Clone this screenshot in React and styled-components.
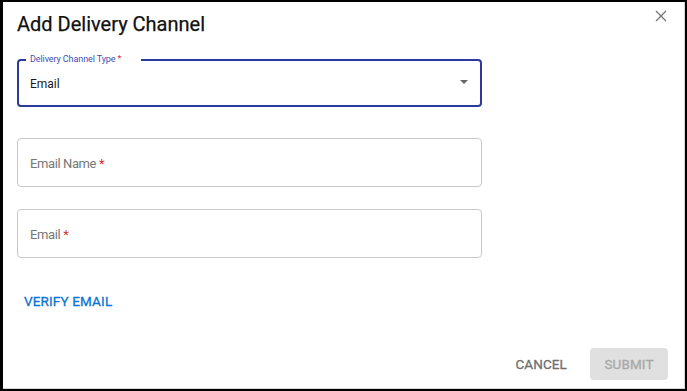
import React from "react";
import styled, { createGlobalStyle } from "styled-components";

const GlobalStyle = createGlobalStyle`
  html, body {
    margin: 0;
    padding: 0;
    background: #000;
  }
  body {
    font-family: Roboto, "Noto Sans", sans-serif;
  }
`;

const Dialog = styled.div`
  box-sizing: border-box;
  margin: 2px 2px 2px 3px;
  height: 387px;
  background: #fff;
  border-right: 1px solid #d6d6d6;
  border-bottom: 1px solid #d6d6d6;
  display: flex;
  flex-direction: column;
  position: relative;
`;

const Header = styled.div`
  padding: 10px 14px 0;
`;

const Title = styled.h2`
  margin: 0;
  font-size: 20px;
  font-weight: 400;
  color: #111;
  line-height: 24px;
  -webkit-text-stroke: 0.25px #111;
`;

const CloseButton = styled.button`
  position: absolute;
  top: 5px;
  right: 14px;
  border: 0;
  background: none;
  padding: 2px;
  cursor: pointer;
  display: flex;
`;

const Form = styled.div`
  padding: 0 14px;
  width: 465px;
  display: flex;
  flex-direction: column;
  margin-top: 23px;
`;

const Outline = styled.div`
  box-sizing: border-box;
  height: ${(p) => (p.$focused ? 48 : 49)}px;
  border: ${(p) => (p.$focused ? "2px solid #2b3a9c" : "1px solid #c8c8c8")};
  border-radius: 4px;
  padding: 0 ${(p) => (p.$focused ? 11 : 12)}px;
  margin-top: ${(p) => p.$gap || 0}px;
  display: flex;
  align-items: center;
  position: relative;
`;

const FloatLabel = styled.span`
  position: absolute;
  top: -7px;
  left: 7px;
  background: #fff;
  font-size: 9px;
  color: #3f4fb5;
  padding: 0 4px;
  line-height: 11px;
  letter-spacing: -0.1px;
  padding-right: 20px;
`;

const Star = styled.span`
  color: #d32f2f;
  margin-left: ${(p) => p.$space || 3}px;
`;

const Value = styled.span`
  font-size: 12px;
  color: #1a1a1a;
  flex: 1;
  margin-top: 2px;
`;

const Caret = styled.span`
  width: 0;
  height: 0;
  border-left: 4px solid transparent;
  border-right: 4px solid transparent;
  border-top: 4px solid #666;
  margin-right: 1px;
  margin-top: -3px;
`;

const Placeholder = styled.span`
  font-size: 13px;
  color: #777;
  letter-spacing: -0.4px;
  margin-top: 1px;
`;

const LinkButton = styled.button`
  align-self: flex-start;
  margin-top: 35px;
  margin-left: 7px;
  border: 0;
  background: none;
  padding: 0;
  font-family: inherit;
  font-size: 13.5px;
  font-weight: 400;
  -webkit-text-stroke: 0.3px #0b74d4;
  letter-spacing: 0.15px;
  color: #0b74d4;
  text-transform: uppercase;
  cursor: pointer;
`;

const Actions = styled.div`
  margin-top: auto;
  padding: 0 16px 8px;
  display: flex;
  justify-content: flex-end;
  align-items: center;
  gap: 23px;
`;

const ActionButton = styled.button`
  border: 0;
  border-radius: 4px;
  font-family: inherit;
  font-size: 13.5px;
  font-weight: 400;
  letter-spacing: 0.1px;
  -webkit-text-stroke: 0.3px currentColor;
  text-transform: uppercase;
  height: 32px;
  padding: 0 ${(p) => (p.$filled ? 13 : 0)}px;
  min-width: ${(p) => (p.$filled ? 78 : 0)}px;
  background: ${(p) => (p.$filled ? "#e0e0e0" : "transparent")};
  color: ${(p) => (p.$filled ? "#a8a8a8" : "#6f6f6f")};
`;

export default function App() {
  return (
    <>
      <GlobalStyle />
      <Dialog>
        <Header>
          <Title>Add Delivery Channel</Title>
        </Header>
        <CloseButton aria-label="close">
          <svg width="14" height="14" viewBox="0 0 14 14">
            <path d="M2 2 L12 12 M12 2 L2 12" stroke="#777" strokeWidth="1.4" />
          </svg>
        </CloseButton>
        <Form>
          <Outline $focused>
            <FloatLabel>
              Delivery Channel Type<Star $space={2}>*</Star>
            </FloatLabel>
            <Value>Email</Value>
            <Caret />
          </Outline>
          <Outline $gap={31}>
            <Placeholder>
              Email Name<Star>*</Star>
            </Placeholder>
          </Outline>
          <Outline $gap={22}>
            <Placeholder>
              Email<Star>*</Star>
            </Placeholder>
          </Outline>
          <LinkButton>Verify Email</LinkButton>
        </Form>
        <Actions>
          <ActionButton>Cancel</ActionButton>
          <ActionButton $filled disabled>
            Submit
          </ActionButton>
        </Actions>
      </Dialog>
    </>
  );
}
